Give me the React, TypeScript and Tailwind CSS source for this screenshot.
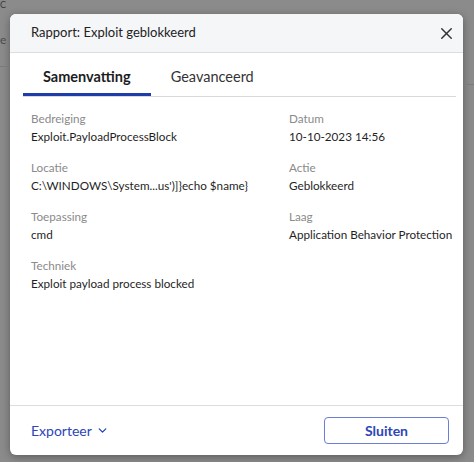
import { X, ChevronDown } from 'lucide-react'

const rows = [
    { label: 'Bedreiging', value: 'Exploit.PayloadProcessBlock' },
    { label: 'Datum', value: '10-10-2023 14:56' },
    { label: 'Locatie', value: "C:\\WINDOWS\\System...us')]}echo $name}" },
    { label: 'Actie', value: 'Geblokkeerd' },
    { label: 'Toepassing', value: 'cmd' },
    { label: 'Laag', value: 'Application Behavior Protection' },
    { label: 'Techniek', value: 'Exploit payload process blocked' },
]

export default function App() {
    return (
        <div className="relative h-[462px] w-[474px] overflow-hidden bg-[#8b8b8b] pl-[10px] pt-[14px] font-['Lato',sans-serif]">
            {/* dimmed page behind */}
            <div className="absolute left-0 top-0 text-[9px] leading-[10px] text-[#3a3a3a]">C</div>
            <div className="absolute left-0 top-[33px] text-[12px] leading-[14px] text-[#4a4a4a]">e</div>
            <div className="absolute left-0 top-[66px] h-px w-[10px] bg-[#7a7a7a]" />
            <div className="absolute right-0 top-[84px] h-px w-[8px] bg-[#7a7a7a]" />

            <div className="flex h-[441px] w-[453px] flex-col overflow-hidden rounded-[6px] bg-white shadow-[0_2px_8px_rgba(0,0,0,0.35)]">
                {/* HEADER */}
                <div className="flex h-[39px] shrink-0 items-center justify-between border-b border-[#dcdde1] bg-[#f5f6f8] pl-[21px] pr-[7px]">
                    <span className="text-[13px] text-[#222]">Rapport: Exploit geblokkeerd</span>
                    <X className="h-[19px] w-[19px] text-[#333]" strokeWidth={1.8} />
                </div>

                {/* TABS */}
                <div className="ml-[13px] mr-[7px] mt-[7px] flex border-b border-[#d8d9dc]">
                    <div className="border-b-[3px] border-[#1e3caa] px-[20px] pb-[5px] pt-[6px] text-[14.5px] font-bold text-[#1d1d1d]">
                        Samenvatting
                    </div>
                    <div className="px-[20px] pb-[5px] pt-[6px] text-[14.5px] text-[#333]">
                        Geavanceerd
                    </div>
                </div>

                {/* CONTENT */}
                <div className="grid flex-1 grid-cols-[258px_1fr] content-start gap-y-[12px] pl-[21px] pt-[11px]">
                    {rows.map((r) => (
                        <div key={r.label} className="flex flex-col whitespace-nowrap">
                            <span className="text-[11.7px] leading-[20px] text-[#8a8a8a]">{r.label}</span>
                            <span className="text-[11.7px] leading-[17px] text-[#1f1f1f]">{r.value}</span>
                        </div>
                    ))}
                </div>

                {/* FOOTER */}
                <div className="flex h-[50px] shrink-0 items-center justify-between border-t border-[#dcdde1] pl-[21px] pr-[14px]">
                    <button className="flex items-center gap-[4px] text-[14px] text-[#2c45b8]">
                        Exporteer
                        <ChevronDown className="h-[13px] w-[13px]" strokeWidth={2.5} />
                    </button>
                    <button className="h-[27px] w-[125px] rounded-[4px] border border-[#6a7ed6] text-[14px] font-bold text-[#2c45b8]">
                        Sluiten
                    </button>
                </div>
            </div>
        </div>
    )
}
